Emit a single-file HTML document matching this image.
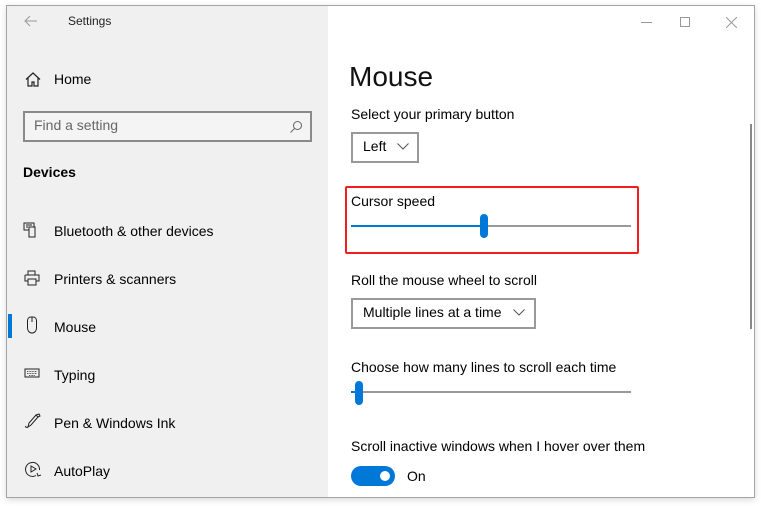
<!DOCTYPE html>
<html><head><meta charset="utf-8"><style>
*{margin:0;padding:0;box-sizing:border-box}
body{width:761px;height:506px;background:#fff;font-family:"Liberation Sans",sans-serif;color:#000;position:relative;overflow:hidden}
.win{position:absolute;left:6px;top:5px;width:749px;height:493px;border:1px solid #a3a3a3;background:#fff;box-shadow:0 2px 6px rgba(0,0,0,.15)}
.left{position:absolute;left:0;top:0;width:321px;height:491px;background:#f0f0f0}
.t{position:absolute;font-size:14px;white-space:nowrap;margin-top:-1px}
.left .t{margin-left:-1px}
.ic{position:absolute}
.box{position:absolute;border:2px solid #999;background:#fff}
</style></head><body>
<div class="win">
<div class="left">
 <svg class="ic" style="left:17px;top:9px" width="14" height="12" viewBox="0 0 14 12"><path d="M13 6H1M6 1L1 6l5 5" fill="none" stroke="#999" stroke-width="1"/></svg>
 <div class="t" style="left:62px;top:9px;font-size:12px;color:#222">Settings</div>
 <svg class="ic" style="left:18px;top:66px" width="16" height="15" viewBox="0 0 16 15"><path d="M1 7.5L8 1l7 6.5M3 6v8h4v-4h2v4h4V6" fill="none" stroke="#222" stroke-width="1.2"/></svg>
 <div class="t" style="left:48px;top:66px">Home</div>
 <div class="box" style="left:16px;top:105px;width:289px;height:31px;background:#f4f4f4;border-color:#8a8a8a"></div>
 <div class="t" style="left:28px;top:112px;color:#666">Find a setting</div>
 <svg class="ic" style="left:282px;top:114px" width="14" height="14" viewBox="0 0 14 14"><circle cx="8.5" cy="5.5" r="4" fill="none" stroke="#666"/><path d="M5.5 8.5L1.5 12.5" stroke="#666"/></svg>
 <div class="t" style="left:17px;top:159px;font-weight:bold">Devices</div>
 <svg class="ic" style="left:16px;top:216px" width="16" height="16" viewBox="0 0 16 16"><rect x="1" y="1" width="10" height="7" fill="none" stroke="#222"/><rect x="6" y="5" width="6" height="10" fill="#f0f0f0" stroke="#222"/><path d="M3 3h6M3 5h2" stroke="#222"/></svg>
 <div class="t" style="left:48px;top:218px">Bluetooth &amp; other devices</div>
 <svg class="ic" style="left:17px;top:264px" width="16" height="16" viewBox="0 0 16 16"><path d="M4 5V1h7v4M1 5h14v6h-3M4 11H1V5M4 9h8v6H4z" fill="none" stroke="#222"/></svg>
 <div class="t" style="left:48px;top:266px">Printers &amp; scanners</div>
 <div style="position:absolute;left:1px;top:308px;width:4px;height:24px;background:#0078d7"></div>
 <svg class="ic" style="left:19px;top:310px" width="12" height="18" viewBox="0 0 12 18"><path d="M6 1H5C2.5 1 1.5 3 1.5 5v7c0 3 2 5 4.5 5s4.5-2 4.5-5V5c0-2-1-4-3.5-4H6v5" fill="none" stroke="#222"/></svg>
 <div class="t" style="left:48px;top:314px">Mouse</div>
 <svg class="ic" style="left:17px;top:362px" width="16" height="10" viewBox="0 0 16 10"><rect x="1" y="1" width="14" height="8" fill="none" stroke="#222"/><path d="M3 3.5h10M3 5.5h10M5 7.5h6" stroke="#222" stroke-width=".8" stroke-dasharray="1 .6"/></svg>
 <div class="t" style="left:48px;top:362px">Typing</div>
 <svg class="ic" style="left:17px;top:406px" width="18" height="18" viewBox="0 0 18 18"><path d="M4 15l1-4 7-8 2 2-7 8zM12 3l3-1 1 2-2 1M4 15c-2 1-3 0-2-1" fill="none" stroke="#222"/></svg>
 <div class="t" style="left:48px;top:410px">Pen &amp; Windows Ink</div>
 <svg class="ic" style="left:17px;top:454px" width="18" height="18" viewBox="0 0 18 18"><path d="M12 15.5A7 7 0 1 1 15.5 10" fill="none" stroke="#222"/><path d="M7 6v6l5-3z" fill="none" stroke="#222"/><path d="M13 13l1 3 3-1" fill="none" stroke="#222"/></svg>
 <div class="t" style="left:48px;top:458px">AutoPlay</div>
</div>
<div style="position:absolute;left:634px;top:16px;width:11px;height:1px;background:#999"></div>
<div style="position:absolute;left:673px;top:11px;width:10px;height:10px;border:1px solid #999"></div>
<svg class="ic" style="left:719px;top:11px" width="11" height="11" viewBox="0 0 11 11"><path d="M0 0l11 11M11 0L0 11" stroke="#999"/></svg>
<div style="position:absolute;left:743px;top:118px;width:2px;height:205px;background:#888"></div>
<div class="t" style="left:342px;top:56px;font-size:28px;color:#111">Mouse</div>
<div class="t" style="left:344px;top:101px">Select your primary button</div>
<div class="box" style="left:344px;top:126px;width:68px;height:31px"></div>
<div class="t" style="left:356px;top:133px">Left</div>
<svg class="ic" style="left:390px;top:137px" width="12" height="7" viewBox="0 0 12 7"><path d="M.5.5L6 6 11.5.5" fill="none" stroke="#555"/></svg>
<div style="position:absolute;left:338px;top:180px;width:294px;height:68px;border:2px solid #f01e1e;border-radius:2px"></div>
<div class="t" style="left:344px;top:188px">Cursor speed</div>
<div style="position:absolute;left:344px;top:219px;width:134px;height:2px;background:#0078d7"></div>
<div style="position:absolute;left:478px;top:219px;width:146px;height:2px;background:#999"></div>
<div style="position:absolute;left:473px;top:208px;width:8px;height:24px;background:#0078d7;border-radius:4px"></div>
<div class="t" style="left:344px;top:267px">Roll the mouse wheel to scroll</div>
<div class="box" style="left:344px;top:292px;width:185px;height:31px"></div>
<div class="t" style="left:356px;top:299px">Multiple lines at a time</div>
<svg class="ic" style="left:506px;top:303px" width="12" height="7" viewBox="0 0 12 7"><path d="M.5.5L6 6 11.5.5" fill="none" stroke="#555"/></svg>
<div class="t" style="left:344px;top:354px">Choose how many lines to scroll each time</div>
<div style="position:absolute;left:344px;top:385px;width:280px;height:2px;background:#999"></div>
<div style="position:absolute;left:344px;top:385px;width:8px;height:2px;background:#0078d7"></div>
<div style="position:absolute;left:348px;top:375px;width:8px;height:24px;background:#0078d7;border-radius:4px"></div>
<div class="t" style="left:344px;top:433px">Scroll inactive windows when I hover over them</div>
<div style="position:absolute;left:344px;top:460px;width:44px;height:20px;background:#0078d7;border-radius:10px"></div>
<div style="position:absolute;left:373px;top:465px;width:10px;height:10px;background:#fff;border-radius:5px"></div>
<div class="t" style="left:400px;top:463px">On</div>
</div>
</body></html>
